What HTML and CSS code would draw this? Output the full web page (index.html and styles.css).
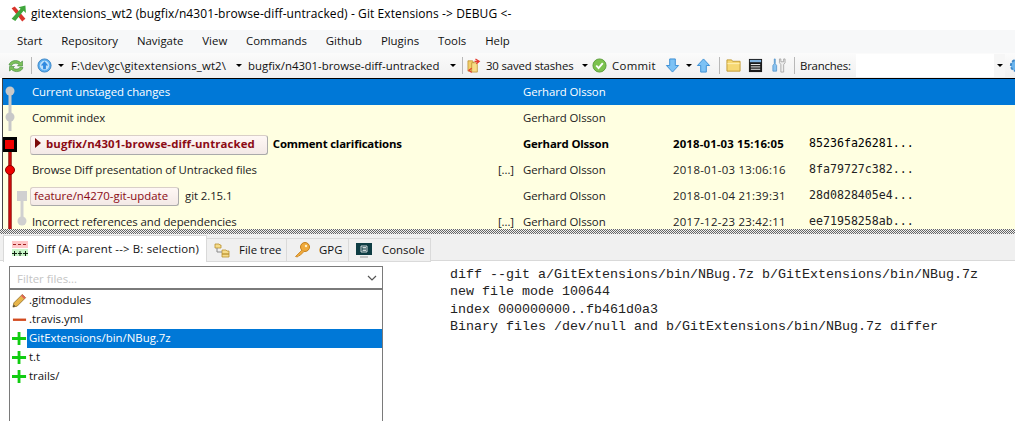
FILE: index.html
```html
<!DOCTYPE html>
<html>
<head>
<meta charset="utf-8">
<title>Git Extensions</title>
<link rel="stylesheet" href="styles.css">
</head>
<body>
<div class="app">
  <header class="titlebar">
    <svg class="appicon" viewBox="0 0 16 16">
      <path d="M1.500 3 L4.500 1.500 L14.500 13 L11.500 15.500 Z" fill="#d9342b"/>
      <path d="M1.500 13 L10 3.500 L8 2 L14.500 .5 L15 7.500 L12.800 5.500 L5 15 Z" fill="#3fa63c"/>
    </svg>
    <span class="titletext">gitextensions_wt2 (bugfix/n4301-browse-diff-untracked) - Git Extensions -&gt; DEBUG &lt;-</span>
  </header>

  <nav class="menubar">
    <span>Start</span><span>Repository</span><span>Navigate</span><span>View</span><span>Commands</span><span>Github</span><span>Plugins</span><span>Tools</span><span>Help</span>
  </nav>

  <div class="toolbar">
    <svg class="t-refresh" viewBox="0 0 16 16"><path d="M1 7 C2 2.500 9 1 12.500 4.500 L14.500 3 V8 H9.500 L11 6.300 C8.500 4.500 5 5 3.800 7.500 Z" fill="#7cc05a" stroke="#3f8a3a" stroke-width=".6"/><path d="M15 9.500 C14 14 7 15 3.500 11.500 L1.500 13 V8.500 H6.500 L5 10 C7.500 11.800 11 11.300 12.200 9 Z" fill="#7cc05a" stroke="#3f8a3a" stroke-width=".6"/></svg>
    <i class="sep s-a"></i>
    <svg class="ic16 t-up" viewBox="0 0 16 16"><circle cx="8" cy="8" r="7" fill="#5aaef0" stroke="#3d86c6"/><circle cx="8" cy="8" r="5" fill="#bfe1fb"/><path d="M8 3.500 L12 8 H9.500 V12 H6.500 V8 H4 Z" fill="#2f8ae0"/></svg>
    <i class="caret c-a"></i>
    <span class="tt t-path">F:\dev\gc\gitextensions_wt2\</span>
    <i class="caret c-b"></i>
    <span class="tt t-branch">bugfix/n4301-browse-diff-untracked</span>
    <i class="caret c-c"></i>
    <i class="sep s-b"></i>
    <svg class="ic16 t-stash" viewBox="0 0 16 16"><path d="M1 3 H6 L7 5 V14 H1 Z" fill="#f3cf6a" stroke="#b98f2e" stroke-width=".8"/><path d="M5 5 H10 L11 7 V15 H5 Z" fill="#f8dd86" stroke="#b98f2e" stroke-width=".8"/><path d="M9 1 L13 3.500 L10 6 M13 3.500 H8" stroke="#e53a2e" stroke-width="1.400" fill="none"/><path d="M5 15.500 L2 13 L5 11" stroke="#e53a2e" stroke-width="1.200" fill="none"/></svg>
    <span class="tt t-stashes">30 saved stashes</span>
    <i class="caret c-d"></i>
    <svg class="ic16 t-commit" viewBox="0 0 16 16"><circle cx="8" cy="8" r="7" fill="#7cc24e" stroke="#5c9e3a"/><path d="M4.500 8 L7 10.800 L11.500 5.500" stroke="#fff" stroke-width="2" fill="none"/></svg>
    <span class="tt t-commitlabel">Commit</span>
    <svg class="ic16 t-down" viewBox="0 0 16 16"><path d="M5 1 H11 V8 H14.500 L8 15 L1.500 8 H5 Z" fill="#7cc2f5" stroke="#3a8ed4"/></svg>
    <i class="caret c-e"></i>
    <svg class="ic16 t-push" viewBox="0 0 16 16"><path d="M5 15 H11 V8 H14.500 L8 1 L1.500 8 H5 Z" fill="#7cc2f5" stroke="#3a8ed4"/></svg>
    <i class="sep s-c"></i>
    <svg class="ic16 t-folder" viewBox="0 0 16 16"><path d="M1 2 H6 L7 3.500 H15 V14 H1 Z" fill="#f6d873" stroke="#c19a34"/><path d="M1.500 6 H14.500" stroke="#fff2b8"/></svg>
    <svg class="ic16 t-console" viewBox="0 0 16 16"><rect x="1" y="1" width="14" height="14" fill="#1a1a1a"/><rect x="2" y="2" width="12" height="2.500" fill="#7fb2e0"/><path d="M3 7 H13 M3 9.500 H13 M3 12 H13" stroke="#fff"/></svg>
    <svg class="ic16 t-tools" viewBox="0 0 16 16"><path d="M3.500 1 V6 L2 8 V14 H6 V8 L4.500 6 V1 Z" fill="#8cc4f0" stroke="#4b8fc8" stroke-width=".8"/><path d="M9 1 V5 L10.500 7 V15 H13.500 V7 L15 5 V1 L13.500 1 V4 H10.500 V1 Z" fill="#eee" stroke="#999" stroke-width=".8"/></svg>
    <i class="sep s-d"></i>
    <span class="tt t-branches">Branches:</span>
    <span class="branchinput"></span>
    <span class="branchdrop"><i class="caret"></i></span>
    <svg class="ic16 t-gear" viewBox="0 0 16 16"><circle cx="8" cy="8" r="6" fill="#6ab4ee" stroke="#3d86c6" stroke-width="2" stroke-dasharray="3 1.500"/></svg>
  </div>

  <section class="grid">
    <div class="row selected"><span class="msg">Current unstaged changes</span><span class="author">Gerhard Olsson</span></div>
    <div class="row"><span class="msg">Commit index</span><span class="author">Gerhard Olsson</span></div>
    <div class="row strong">
      <span class="msg"><span class="ref ref-head"><i class="reftri"></i>bugfix/n4301-browse-diff-untracked</span>Comment clarifications</span>
      <span class="author">Gerhard Olsson</span><span class="date">2018-01-03 15:16:05</span><span class="sha">85236fa26281...</span>
    </div>
    <div class="row">
      <span class="msg"><span>Browse Diff presentation of Untracked files</span><span class="more">[...]</span></span>
      <span class="author">Gerhard Olsson</span><span class="date">2018-01-03 13:06:16</span><span class="sha">8fa79727c382...</span>
    </div>
    <div class="row">
      <span class="msg"><span class="ref">feature/n4270-git-update</span>git 2.15.1</span>
      <span class="author">Gerhard Olsson</span><span class="date">2018-01-04 21:39:31</span><span class="sha">28d0828405e4...</span>
    </div>
    <div class="row">
      <span class="msg"><span>Incorrect references and dependencies</span><span class="more">[...]</span></span>
      <span class="author">Gerhard Olsson</span><span class="date">2017-12-23 23:42:11</span><span class="sha">ee71958258ab...</span>
    </div>
    <svg class="graph" viewBox="0 0 30 150" width="30" height="150">
      <path d="M7 12 V52" stroke="#c8c8c8" stroke-width="3"/>
      <circle cx="7" cy="12" r="4.500" fill="#c8c8c8"/>
      <circle cx="7" cy="38" r="4.500" fill="#c8c8c8"/>
      <path d="M7 65 V150" stroke="#8a0000" stroke-width="3.400"/>
      <path d="M7 65 V150" stroke="#e01010" stroke-width="1.400"/>
      <rect x="-1" y="58" width="15" height="15" fill="#000"/>
      <rect x="2" y="61" width="9" height="9" fill="#f00000"/>
      <circle cx="7" cy="91" r="4.500" fill="#f00000" stroke="#8a0000"/>
      <path d="M19 117 V142" stroke="#d0d0d0" stroke-width="3"/>
      <rect x="14" y="112" width="10" height="10" fill="#d0d0d0"/>
      <circle cx="19" cy="142" r="4.500" fill="#d0d0d0"/>
    </svg>
  </section>

  <div class="splitter"></div>

  <div class="tabs">
    <div class="tab active">
      <svg class="ic-diff" viewBox="0 0 16 16"><rect x="0" y="0" width="16" height="7" fill="#ffc8c8"/><rect x="0" y="8" width="16" height="7" fill="#c8f5c8"/><path d="M1 3.500 H4 M6 3.500 H9 M11 3.500 H14" stroke="#a02020"/><path d="M0 12.500 H5 M6 12.500 H10 M11 12.500 H16 M2.500 10 V15 M8 10 V15 M13.500 10 V15" stroke="#102010"/></svg>
      <span>Diff (A: parent --&gt; B: selection)</span>
    </div>
    <div class="tab w-tree">
      <svg class="ic-tab" viewBox="0 0 16 16"><path d="M1 2 H5 L6 3 H7 V6 H1 Z M8 8 H12 L13 9 H15 V12 H8 Z M8 12 H15 V15 H8 Z" fill="#f6dc8a" stroke="#b98f2e" stroke-width=".8"/><path d="M3 6 V10 H8" stroke="#888" fill="none"/></svg>
      <span>File tree</span>
    </div>
    <div class="tab w-gpg">
      <svg class="ic-tab" viewBox="0 0 16 16"><circle cx="11" cy="5" r="4.500" fill="#f0aa3c" stroke="#c47f1c"/><circle cx="12" cy="4" r="1.200" fill="#fff0c8"/><path d="M8 8 L1.500 14.500 L3.500 15 L5 13.500 L6 13.500 L10 9.500" fill="#f0aa3c" stroke="#c47f1c" stroke-width=".8"/></svg>
      <span>GPG</span>
    </div>
    <div class="tab w-console">
      <svg class="ic-tab" viewBox="0 0 16 16"><rect x="0" y="1" width="16" height="12" fill="#0f3d44"/><path d="M5 4 H11 V10 H5 Z M6.500 7 H10 M6.500 5.500 H10 M6.500 8.500 H10" stroke="#fff" fill="none" stroke-width=".8"/><path d="M4 15 H12" stroke="#999"/></svg>
      <span>Console</span>
    </div>
  </div>

  <div class="panes">
    <aside class="filepane">
      <div class="filter"><span>Filter files...</span><svg class="chev" viewBox="0 0 10 6" width="10" height="6"><path d="M1 1 L5 5 L9 1" stroke="#555" fill="none" stroke-width="1.200"/></svg></div>
      <ul class="files">
        <li><svg class="ic-file" viewBox="0 0 16 16"><path d="M1 15 L2 10.500 L11 1.500 L14.500 5 L5.500 14 Z" fill="#e8b54a" stroke="#8a6a2a" stroke-width=".8"/><path d="M11 1.500 L14.500 5 L13 6.500 L9.500 3 Z" fill="#e0635a"/><path d="M1 15 L2 12.500 L3.500 14 Z" fill="#333"/></svg><span>.gitmodules</span></li>
        <li><svg class="ic-file" viewBox="0 0 16 16"><rect x="1" y="7" width="14" height="2.500" fill="#d24a1e"/></svg><span>.travis.yml</span></li>
        <li class="sel"><svg class="ic-file" viewBox="0 0 16 16"><path d="M0 8 H15 M7.500 1 V15" stroke="#11cc11" stroke-width="3"/></svg><span>GitExtensions/bin/NBug.7z</span></li>
        <li><svg class="ic-file" viewBox="0 0 16 16"><path d="M0 8 H15 M7.500 1 V15" stroke="#11cc11" stroke-width="3"/></svg><span>t.t</span></li>
        <li><svg class="ic-file" viewBox="0 0 16 16"><path d="M0 8 H15 M7.500 1 V15" stroke="#11cc11" stroke-width="3"/></svg><span>trails/</span></li>
      </ul>
    </aside>
    <pre class="diff">diff --git a/GitExtensions/bin/NBug.7z b/GitExtensions/bin/NBug.7z
new file mode 100644
index 000000000..fb461d0a3
Binary files /dev/null and b/GitExtensions/bin/NBug.7z differ</pre>
  </div>
</div>
</body>
</html>
```
FILE: styles.css
```css
* { box-sizing: border-box; }
html, body { margin: 0; padding: 0; height: 100%; overflow: hidden; background: #fff; }
body { font-family: "Open Sans", "Noto Sans", sans-serif; font-size: 11.4px; color: #111; }
.app { width: 1015px; height: 421px; display: flex; flex-direction: column; overflow: hidden; }

.titlebar { height: 30px; display: flex; align-items: center; padding: 0 0 3px 10px; background: #fff; flex: none; }
.appicon { width: 17px; height: 17px; margin-right: 4px; }
.titletext { font-size: 12px; letter-spacing: .09px; color: #000; }

.menubar { height: 23px; flex: none; display: flex; align-items: center; gap: 18.9px; padding: 0 0 2px 17px; background: #f7f8f9; }

.toolbar { height: 25px; flex: none; display: flex; align-items: center; background: linear-gradient(#fbfbfb, #f0f0f0); padding-left: 8px; }
.ic16 { width: 15px; height: 15px; flex: none; }
.t-refresh { width: 16px; height: 16px; flex: none; }
.sep { width: 1px; height: 17px; background: #b8b8b8; flex: none; }
.caret { width: 0; height: 0; border-left: 3px solid transparent; border-right: 3px solid transparent; border-top: 3px solid #000; flex: none; }
.tt { white-space: nowrap; flex: none; }
.s-a { margin-left: 7px; }
.t-up { margin-left: 5px; }
.c-a { margin-left: 6px; }
.t-path { margin-left: 7px; width: 155px; letter-spacing: .14px; }
.c-b { margin-left: 10px; }
.t-branch { margin-left: 6px; width: 201px; }
.c-c { margin-left: 1px; }
.s-b { margin-left: 6px; }
.t-stash { margin-left: 4px; }
.t-stashes { margin-left: 4px; width: 87px; letter-spacing: -.15px; }
.c-d { margin-left: 9px; }
.t-commit { margin-left: 4px; }
.t-commitlabel { margin-left: 5px; width: 45px; letter-spacing: .3px; }
.t-down { margin-left: 8px; }
.c-e { margin-left: 6px; }
.t-push { margin-left: 4px; }
.s-c { margin-left: 8px; }
.t-folder { margin-left: 6px; }
.t-console { margin-left: 7px; }
.t-tools { margin-left: 8px; }
.s-d { margin-left: 8px; }
.t-branches { margin-left: 5px; width: 52px; letter-spacing: -.2px; }
.branchinput { margin-left: 4px; width: 138px; height: 23px; background: #fff; flex: none; }
.branchdrop { width: 11px; height: 23px; background: #f6f6f6; display: flex; align-items: center; justify-content: center; flex: none; }
.t-gear { margin-left: 4px; }

.grid { position: relative; height: 151px; flex: none; margin-left: 2px; border-top: 1px solid #000; border-left: 1px solid #444; background: #ffffe1; overflow: hidden; }
.row { height: 26px; display: grid; grid-template-columns: 493px 150px 136px 1fr; align-items: center; padding: 0 0 2px 27px; white-space: nowrap; color: #222; background: #ffffe1; letter-spacing: -.08px; }
.row.selected { background: #0078d7; color: #fff; }
.row.strong { font-weight: 700; color: #000; letter-spacing: -.18px; }
.msg { display: flex; align-items: center; padding-right: 9px; padding-left: 2px; }
.more { margin-left: auto; }
.row > .author { grid-column: 2; }
.date { letter-spacing: .28px; }
.row.strong .date { letter-spacing: .15px; }
.sha { font-family: "DejaVu Sans Mono", monospace; font-size: 11.6px; font-weight: 400; letter-spacing: 0; }
.ref { height: 19px; display: inline-flex; align-items: center; padding: 0 10px 3px 3px; margin: 3px 6px 0 -2px; color: #8b0a14; letter-spacing: 0; border: 1px solid #d9cfc8; border-right-color: #aaa; border-bottom-color: #aaa; border-radius: 3px; background: linear-gradient(#fff8f5, #f3e9e6); }
.ref-head { height: 20px; padding: 0 12px 3px 4px; margin-right: 5px; letter-spacing: .12px; }
.reftri { width: 0; height: 0; border-top: 5px solid transparent; border-bottom: 5px solid transparent; border-left: 6px solid #7a0a0a; margin-right: 5px; }
.graph { position: absolute; left: 0; top: 0; }

.splitter { height: 6px; flex: none; border-bottom: 1px solid #f0f0f0; background-color: #f0f0f0; background-image: repeating-conic-gradient(#666 0 25%, #f0f0f0 0 50%); background-size: 2px 2px; }
.tabs { height: 27px; flex: none; display: flex; align-items: flex-end; padding-left: 3px; background: linear-gradient(#f0f0f0 0 25px, #d9d9d9 25px 26px, #fff 26px); }
.tab { height: 24px; display: flex; align-items: center; background: #f0f0f0; border: 1px solid #dadada; border-left: 0; white-space: nowrap; padding: 0 0 1px 6px; }
.tab.active { height: 27px; width: 204px; background: #fff; border: 1px solid #d9d9d9; border-bottom: 0; padding: 0 0 1px 8px; gap: 8px; letter-spacing: .17px; }
.w-tree { width: 80px; gap: 9px; padding-left: 7px; }
.w-gpg { width: 62px; gap: 9px; padding-left: 7px; }
.w-console { width: 82px; gap: 10px; padding-left: 7px; }
.ic-diff { width: 16px; height: 16px; flex: none; }
.ic-tab { width: 16px; height: 16px; flex: none; }

.panes { flex: 1; display: flex; min-height: 0; }
.filepane { width: 447px; flex: none; padding: 4px 0 0 9px; }
.filter { width: 374px; height: 23px; border: 1px solid #7a7a7a; display: flex; align-items: center; justify-content: space-between; padding: 1px 4px 0 7px; color: #c4c4c4; }
.chev { margin-right: 1px; }
.files { list-style: none; margin: 0; padding: 1px 0 0 0; width: 374px; height: 200px; border: 1px solid #7a7a7a; }
.files li { height: 19px; display: flex; align-items: center; padding-left: 2px; color: #111; }
.ic-file { width: 15px; height: 15px; flex: none; }
.files li span { flex: 1; height: 19px; line-height: 18px; padding-left: 2px; }
.files li.sel span { background: #0078d7; color: #fff; }
.diff { margin: 4px 0 0 3px; font-family: "Liberation Mono", monospace; font-size: 13.33px; line-height: 17.3px; color: #222; }
```
